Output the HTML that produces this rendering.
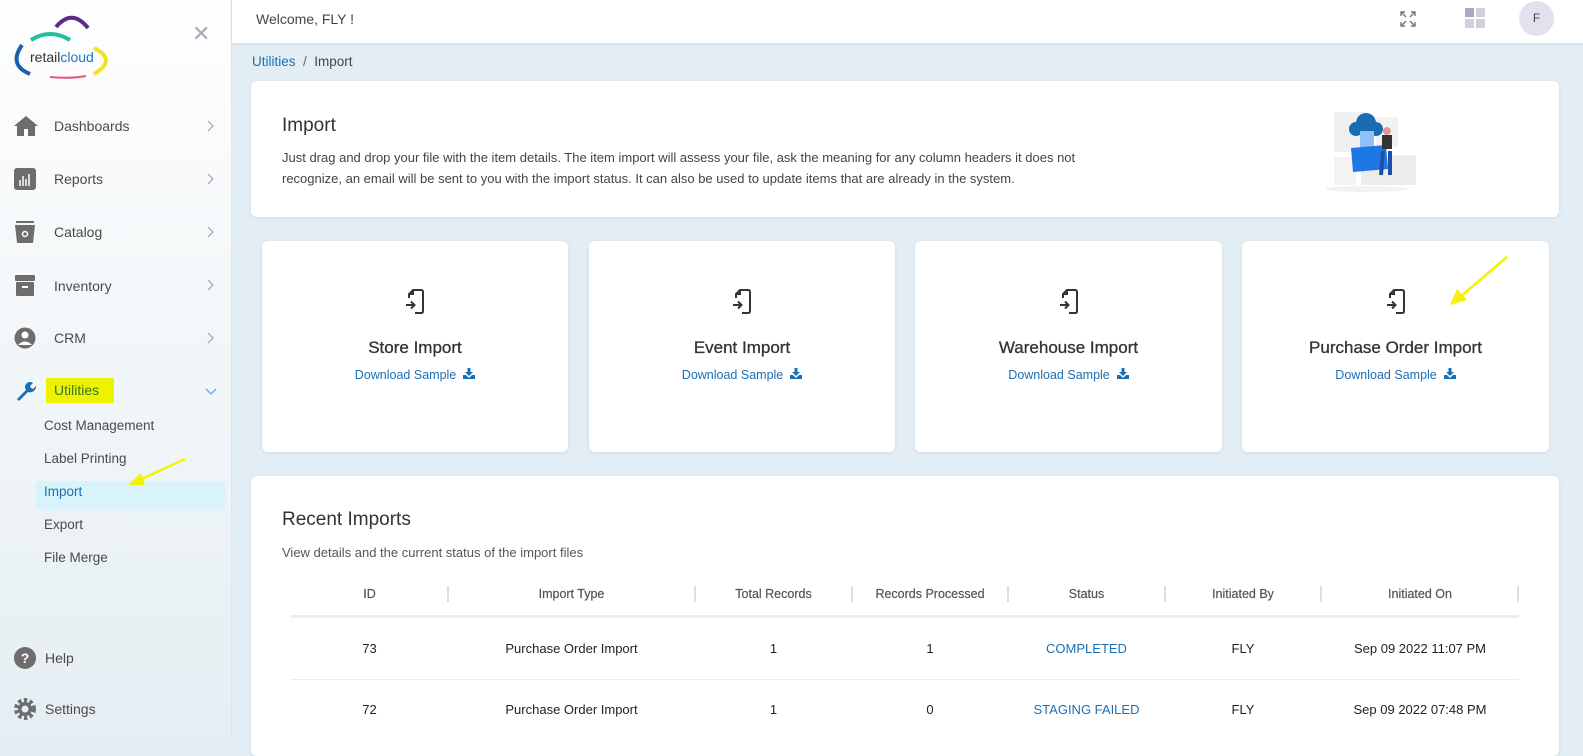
<!DOCTYPE html>
<html><head><meta charset="utf-8"><style>
*{box-sizing:border-box;margin:0;padding:0}
body{width:1583px;height:738px;overflow:hidden;font-family:"Liberation Sans",sans-serif;background:#e3edf4;position:relative;color:#333}
.abs{position:absolute}
#side{left:0;top:0;width:232px;height:738px;background:linear-gradient(#fefefe,#e5eef3);border-right:1px solid #dde6ec}
.nav{position:absolute;left:14px;font-size:14px;color:#4a4a4a;display:flex;align-items:center}
.nav span{position:absolute;left:40px;white-space:nowrap}
.chev{position:absolute;left:207px;}
.sub{position:absolute;left:44px;font-size:13.5px;color:#4a4a4a}
#top{left:232px;top:0;width:1351px;height:43px;background:#fff;box-shadow:0 1px 3px rgba(0,0,0,.08)}
.card{position:absolute;background:#fff;border-radius:6px;box-shadow:0 1px 4px rgba(0,0,0,.08)}
.ic{position:absolute;text-align:center;width:100%}
.ic h3{font-size:17px;font-weight:normal;color:#333;margin-top:4px;-webkit-text-stroke:.3px #333}
.dl{font-size:12.5px;color:#1b6fb5;margin-top:10px}
.th{position:absolute;top:587px;font-size:12.5px;color:#555;text-align:center;-webkit-text-stroke:.2px #555}
.sep{position:absolute;top:586px;width:2px;height:16px;background:#dde}
.td{position:absolute;font-size:13px;color:#222;text-align:center}
</style></head><body>
<div id="side" class="abs">
<svg class="abs" style="left:10px;top:10px" width="105" height="70" viewBox="0 0 105 70">
<path d="M46 17 Q62 -2 78 18" stroke="#5b2a8c" stroke-width="4" fill="none"/>
<path d="M21 30 Q40 18 60 30" stroke="#1fbf9f" stroke-width="4" fill="none"/>
<path d="M12 35 Q-2 55 20 64" stroke="#1a5fb0" stroke-width="4" fill="none"/>
<path d="M84 38 Q108 50 84 64" stroke="#f2e51c" stroke-width="4" fill="none"/>
<path d="M40 67 Q60 69 76 66" stroke="#e85677" stroke-width="2" fill="none"/>
<text x="20" y="52" font-family="Liberation Sans" font-size="14" fill="#333">retail<tspan fill="#1b75c0">cloud</tspan></text>
</svg>
<div class="abs" style="left:192px;top:24px;font-size:22px;color:#a6abb8;line-height:20px">✕</div>
<div class="nav" style="top:115px"><svg width="24" height="22" viewBox="0 0 24 22"><path d="M12 1 L24 11 H21 V21 H3 V11 H0Z" fill="#6d6d6d"/><rect x="10" y="14" width="4" height="7" fill="#fff"/></svg><span>Dashboards</span></div>
<svg class="chev" style="top:120px" width="8" height="12"><path d="M1 1L6 6L1 11" stroke="#aab" stroke-width="1.3" fill="none"/></svg>
<div class="nav" style="top:168px"><svg width="22" height="22"><rect width="22" height="22" rx="3" fill="#6d6d6d"/><path d="M6 18V12M9 18V8M12 18V11M15 18V6" stroke="#fff" stroke-width="1.5"/></svg><span>Reports</span></div>
<svg class="chev" style="top:173px" width="8" height="12"><path d="M1 1L6 6L1 11" stroke="#aab" stroke-width="1.3" fill="none"/></svg>
<div class="nav" style="top:221px"><svg width="22" height="22"><rect x="2" y="0" width="18" height="2" fill="#6d6d6d"/><path d="M1 4H21L19 22H3Z" fill="#6d6d6d"/><circle cx="11" cy="13" r="2.5" fill="none" stroke="#fff" stroke-width="1.5"/></svg><span>Catalog</span></div>
<svg class="chev" style="top:226px" width="8" height="12"><path d="M1 1L6 6L1 11" stroke="#aab" stroke-width="1.3" fill="none"/></svg>
<div class="nav" style="top:275px"><svg width="22" height="22"><rect x="1" y="0" width="20" height="6" rx="1" fill="#6d6d6d"/><rect x="2" y="7" width="18" height="14" rx="1" fill="#6d6d6d"/><rect x="8" y="11" width="6" height="2" fill="#fff"/></svg><span>Inventory</span></div>
<svg class="chev" style="top:279px" width="8" height="12"><path d="M1 1L6 6L1 11" stroke="#aab" stroke-width="1.3" fill="none"/></svg>
<div class="nav" style="top:327px"><svg width="22" height="22"><circle cx="11" cy="11" r="10.5" fill="#6d6d6d"/><circle cx="11" cy="8" r="3.5" fill="#fff"/><path d="M4 18 Q11 11 18 18" fill="#fff"/></svg><span>CRM</span></div>
<svg class="chev" style="top:332px" width="8" height="12"><path d="M1 1L6 6L1 11" stroke="#aab" stroke-width="1.3" fill="none"/></svg>
<div class="nav" style="top:380px"><svg width="22" height="22" viewBox="0 0 22 22"><path d="M3 19 L12 10 A5 5 0 0 1 19 3 L16 6 L17 8 L19 9 L22 6 A6 6 0 0 1 14 12 L5 21Z" fill="#1b6fb5"/></svg></div>
<div class="abs" style="left:46px;top:378px;width:68px;height:25px;background:#eef100;color:#2f7a2f;font-size:14px;padding:4px 0 0 8px">Utilities</div>
<svg class="abs" style="left:205px;top:388px" width="12" height="8"><path d="M1 1L6 6L11 1" stroke="#6aa6d6" stroke-width="1.3" fill="none"/></svg>
<div class="sub" style="top:418px">Cost Management</div>
<div class="sub" style="top:451px">Label Printing</div>
<div class="abs" style="left:36px;top:481px;width:190px;height:28px;background:#d9f3fc;border-radius:3px"></div>
<div class="sub" style="top:484px;color:#1b6fb5">Import</div>
<div class="sub" style="top:517px">Export</div>
<div class="sub" style="top:550px">File Merge</div>
<svg class="abs" style="left:125px;top:455px" width="65" height="35"><path d="M60 4 L10 27" stroke="#f4f400" stroke-width="2.5"/><path d="M3 30 L16 18 L20 30Z" fill="#f4f400"/></svg>
<div class="nav" style="top:647px"><svg width="22" height="22"><circle cx="11" cy="11" r="11" fill="#6d6d6d"/><text x="11" y="16" text-anchor="middle" font-size="14" font-weight="bold" fill="#fff" font-family="Liberation Sans">?</text></svg><span style="left:31px">Help</span></div>
<div class="nav" style="top:698px"><svg width="22" height="22" viewBox="0 0 22 22"><circle cx="11" cy="11" r="8" fill="none" stroke="#6d6d6d" stroke-width="6" stroke-dasharray="3 2.2"/><circle cx="11" cy="11" r="7" fill="#6d6d6d"/><circle cx="11" cy="11" r="3.5" fill="#e8eff3"/></svg><span style="left:31px">Settings</span></div>
</div>

<div id="top" class="abs">
<div class="abs" style="left:24px;top:11px;font-size:14px;color:#444">Welcome, FLY !</div>
<svg class="abs" style="left:1168px;top:11px" width="16" height="16" stroke="#777" stroke-width="1.4" fill="none"><path d="M1 5V1H5M1 1L6 6M11 1H15V5M15 1L10 6M1 11V15H5M1 15L6 10M15 11V15H11M15 15L10 10"/></svg>
<div class="abs" style="left:1233px;top:8px;width:9px;height:9px;background:#a8abbd"></div>
<div class="abs" style="left:1244px;top:8px;width:9px;height:9px;background:#cfd1dc"></div>
<div class="abs" style="left:1233px;top:19px;width:9px;height:9px;background:#cfd1dc"></div>
<div class="abs" style="left:1244px;top:19px;width:9px;height:9px;background:#cfd1dc"></div>
<div class="abs" style="left:1287px;top:1px;width:35px;height:35px;border-radius:50%;background:#e2e2ee;text-align:center;line-height:35px;font-size:12px;color:#444">F</div>
</div>

<div class="abs" style="left:252px;top:54px;font-size:13.5px"><span style="color:#1b6fb5">Utilities</span><span style="color:#666">&nbsp;&nbsp;/&nbsp;&nbsp;</span><span style="color:#444">Import</span></div>

<div class="card" style="left:251px;top:81px;width:1308px;height:136px">
<div class="abs" style="left:31px;top:34px;font-size:19px;color:#333">Import</div>
<div class="abs" style="left:31px;top:66px;font-size:13px;line-height:21px;color:#444;width:850px">Just drag and drop your file with the item details. The item import will assess your file, ask the meaning for any column headers it does not recognize, an email will be sent to you with the import status. It can also be used to update items that are already in the system.</div>
<svg class="abs" style="left:1075px;top:26px" width="95" height="85">
<rect x="8" y="5" width="32" height="40" fill="#f0f0f0"/><rect x="50" y="10" width="22" height="30" fill="#f2f2f2"/><rect x="35" y="48" width="55" height="30" fill="#ececec"/><rect x="8" y="50" width="22" height="28" fill="#f3f3f3"/>
<ellipse cx="40" cy="82" rx="42" ry="3" fill="#f2f2f2"/>
<circle cx="40" cy="16" r="10" fill="#1a6cb0"/><circle cx="30" cy="22" r="7" fill="#1a6cb0"/><circle cx="50" cy="22" r="7" fill="#1a6cb0"/>
<rect x="34" y="24" width="14" height="18" fill="#8ec1f5"/>
<path d="M25 41 L60 38 L62 62 L27 65Z" fill="#1d78e6"/>
<rect x="56" y="28" width="10" height="14" fill="#333"/><circle cx="61" cy="24" r="4" fill="#d99"/><path d="M57 44 L55 68 M64 44 L64 68" stroke="#1b4fa8" stroke-width="4"/>
</svg>
</div>

<div class="card" style="left:262px;top:241px;width:306px;height:211px"><div class="ic" style="top:48px"><svg width="22" height="26" viewBox="0 0 22 26" fill="none" stroke="#333" stroke-width="2"><path d="M5 9V5L9 1H17Q19 1 19 3V22Q19 24 17 24H11M5 5H9V1"/><path d="M2 16H10M7 12.5L10.5 16L7 19.5"/></svg><h3 style="margin-top:18px">Store Import</h3><div class="dl">Download Sample &nbsp;<svg width="12" height="11" viewBox="0 0 12 11"><path d="M4.5 0H7.5V4H10L6 8L2 4H4.5Z M0 7H3L6 10L9 7H12V11H0Z" fill="#1b6fb5"/></svg></div></div></div>
<div class="card" style="left:589px;top:241px;width:306px;height:211px"><div class="ic" style="top:48px"><svg width="22" height="26" viewBox="0 0 22 26" fill="none" stroke="#333" stroke-width="2"><path d="M5 9V5L9 1H17Q19 1 19 3V22Q19 24 17 24H11M5 5H9V1"/><path d="M2 16H10M7 12.5L10.5 16L7 19.5"/></svg><h3 style="margin-top:18px">Event Import</h3><div class="dl">Download Sample &nbsp;<svg width="12" height="11" viewBox="0 0 12 11"><path d="M4.5 0H7.5V4H10L6 8L2 4H4.5Z M0 7H3L6 10L9 7H12V11H0Z" fill="#1b6fb5"/></svg></div></div></div>
<div class="card" style="left:915px;top:241px;width:307px;height:211px"><div class="ic" style="top:48px"><svg width="22" height="26" viewBox="0 0 22 26" fill="none" stroke="#333" stroke-width="2"><path d="M5 9V5L9 1H17Q19 1 19 3V22Q19 24 17 24H11M5 5H9V1"/><path d="M2 16H10M7 12.5L10.5 16L7 19.5"/></svg><h3 style="margin-top:18px">Warehouse Import</h3><div class="dl">Download Sample &nbsp;<svg width="12" height="11" viewBox="0 0 12 11"><path d="M4.5 0H7.5V4H10L6 8L2 4H4.5Z M0 7H3L6 10L9 7H12V11H0Z" fill="#1b6fb5"/></svg></div></div></div>
<div class="card" style="left:1242px;top:241px;width:307px;height:211px"><div class="ic" style="top:48px"><svg width="22" height="26" viewBox="0 0 22 26" fill="none" stroke="#333" stroke-width="2"><path d="M5 9V5L9 1H17Q19 1 19 3V22Q19 24 17 24H11M5 5H9V1"/><path d="M2 16H10M7 12.5L10.5 16L7 19.5"/></svg><h3 style="margin-top:18px">Purchase Order Import</h3><div class="dl">Download Sample &nbsp;<svg width="12" height="11" viewBox="0 0 12 11"><path d="M4.5 0H7.5V4H10L6 8L2 4H4.5Z M0 7H3L6 10L9 7H12V11H0Z" fill="#1b6fb5"/></svg></div></div>
<svg class="abs" style="left:200px;top:12px" width="70" height="60"><path d="M65 4 L18 44" stroke="#f4f400" stroke-width="2.5"/><path d="M8 52 L15 36 L25 47Z" fill="#f4f400"/></svg></div>

<div class="card" style="left:251px;top:476px;width:1308px;height:280px">
<div class="abs" style="left:31px;top:33px;font-size:19px;color:#333">Recent Imports</div>
<div class="abs" style="left:31px;top:69px;font-size:13px;color:#555">View details and the current status of the import files</div>
</div>
<div class="abs" style="left:291px;top:615px;width:1228px;height:3px;background:#e6eef5"></div>
<div class="abs" style="left:291px;top:679px;width:1228px;height:1px;background:#e6eef5"></div>
<div class="th" style="left:291px;width:157px">ID</div>
<div class="sep" style="left:447px"></div>
<div class="th" style="left:448px;width:247px">Import Type</div>
<div class="sep" style="left:694px"></div>
<div class="th" style="left:695px;width:157px">Total Records</div>
<div class="sep" style="left:851px"></div>
<div class="th" style="left:852px;width:156px">Records Processed</div>
<div class="sep" style="left:1007px"></div>
<div class="th" style="left:1008px;width:157px">Status</div>
<div class="sep" style="left:1164px"></div>
<div class="th" style="left:1165px;width:156px">Initiated By</div>
<div class="sep" style="left:1320px"></div>
<div class="th" style="left:1321px;width:198px">Initiated On</div>
<div class="sep" style="left:1517px"></div>

<div class="td" style="left:291px;width:157px;top:641px">73</div>
<div class="td" style="left:448px;width:247px;top:641px">Purchase Order Import</div>
<div class="td" style="left:695px;width:157px;top:641px">1</div>
<div class="td" style="left:852px;width:156px;top:641px">1</div>
<div class="td" style="left:1008px;width:157px;top:641px;color:#1b6fb5">COMPLETED</div>
<div class="td" style="left:1165px;width:156px;top:641px">FLY</div>
<div class="td" style="left:1321px;width:198px;top:641px">Sep 09 2022 11:07 PM</div>
<div class="td" style="left:291px;width:157px;top:702px">72</div>
<div class="td" style="left:448px;width:247px;top:702px">Purchase Order Import</div>
<div class="td" style="left:695px;width:157px;top:702px">1</div>
<div class="td" style="left:852px;width:156px;top:702px">0</div>
<div class="td" style="left:1008px;width:157px;top:702px;color:#1b6fb5">STAGING FAILED</div>
<div class="td" style="left:1165px;width:156px;top:702px">FLY</div>
<div class="td" style="left:1321px;width:198px;top:702px">Sep 09 2022 07:48 PM</div>
</body></html>
